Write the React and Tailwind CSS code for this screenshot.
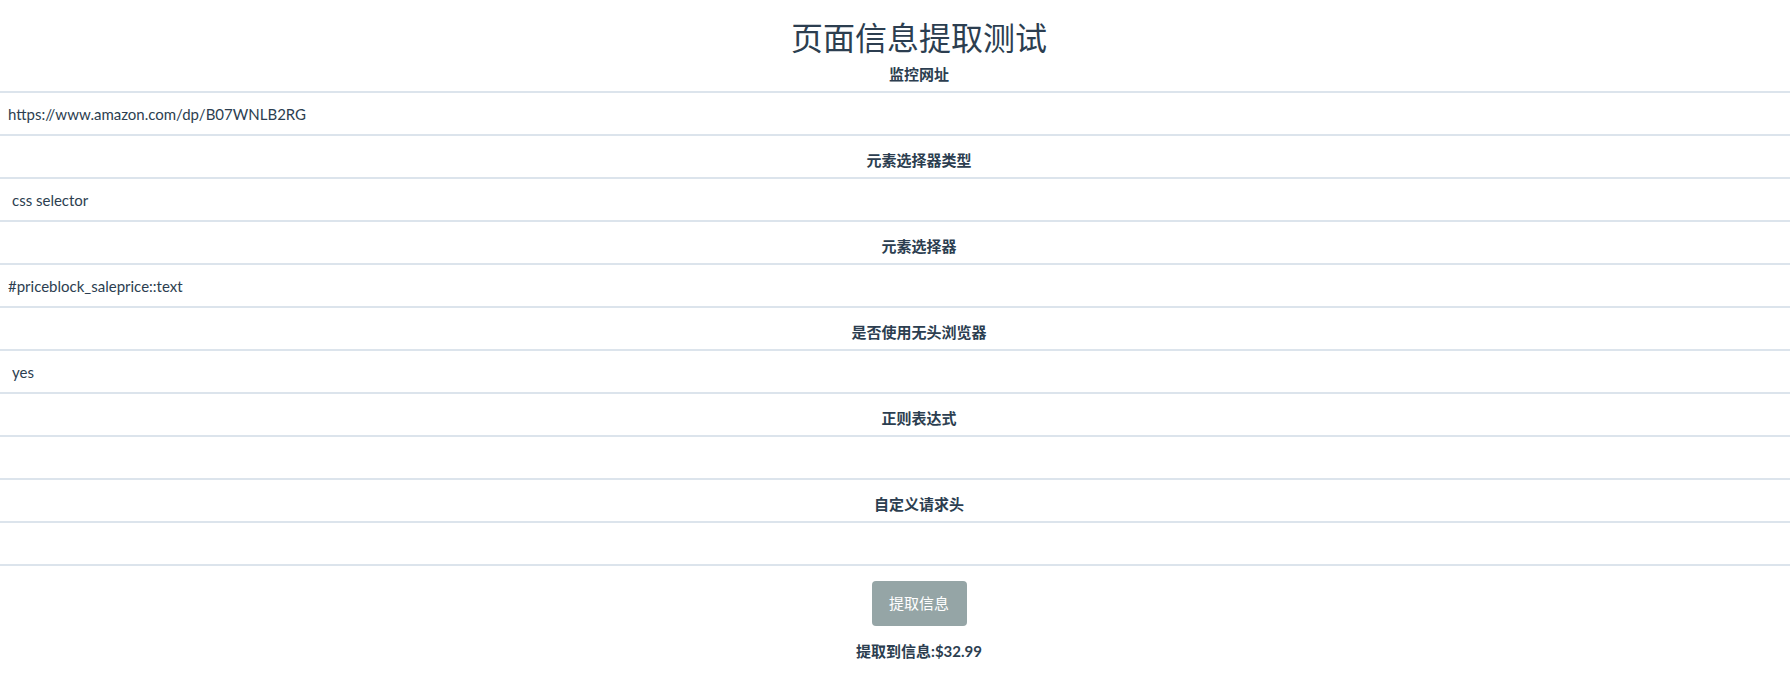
const fields = [
  { label: "监控网址", value: "https://www.amazon.com/dp/B07WNLB2RG" },
  { label: "元素选择器类型", value: "css selector", select: true },
  { label: "元素选择器", value: "#priceblock_saleprice::text" },
  { label: "是否使用无头浏览器", value: "yes", select: true },
  { label: "正则表达式", value: "" },
  { label: "自定义请求头", value: "" },
];

export default function App() {
  return (
    <div className="min-h-screen overflow-hidden bg-white text-[#2c3e50] font-['Lato','Noto_Sans_CJK_SC',sans-serif]">
      <div className="w-[1838px] pt-4">
        <h1 className="text-center text-[32px] leading-[43px] font-normal mb-1">页面信息提取测试</h1>
        <form onSubmit={(e) => e.preventDefault()}>
          {fields.map((f, i) => (
            <div key={f.label}>
              <label className={"block text-center font-bold text-[15px] leading-[22px] mb-[6px] " + (i > 0 ? "pt-[13px]" : "")}>
                {f.label}
              </label>
              <input
                readOnly
                value={f.value}
                className={"block w-full h-[45px] border-y-2 border-[#dce4ec] bg-white text-[15px] text-[#2c3e50] outline-none " + (f.select ? "px-3" : "px-2")}
              />
            </div>
          ))}
          <div className="flex flex-col items-center">
            <button type="submit" className="mt-[15px] h-[45px] w-[95px] rounded bg-[#95a5a6] text-white text-[15px]">
              提取信息
            </button>
            <div className="mt-[14px] font-bold text-[15px] leading-[22px]">提取到信息:$32.99</div>
          </div>
        </form>
      </div>
    </div>
  );
}
